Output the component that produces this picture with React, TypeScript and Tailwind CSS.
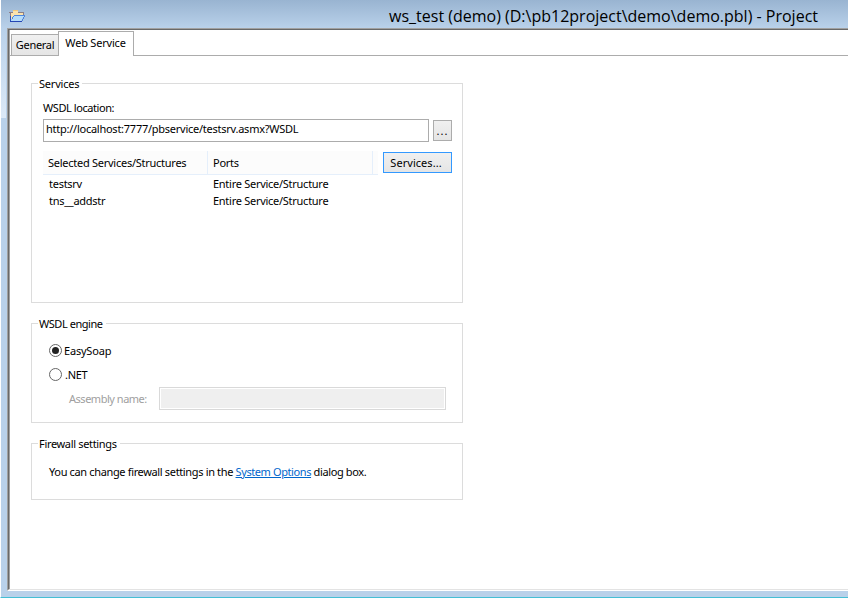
import type { ReactNode } from "react";

type Row = { name: string; port: string };

const rows: Row[] = [
  { name: "testsrv", port: "Entire Service/Structure" },
  { name: "tns__addstr", port: "Entire Service/Structure" },
];

function FolderIcon() {
  return (
    <svg width="17" height="13" viewBox="0 0 17 13" shapeRendering="crispEdges">
      <path d="M2 3h2V1h5v2h5v3H5l-3 4z" fill="#fbe3ad" />
      <path d="M4 0h5v1H4z" fill="#f3c876" />
      <path d="M0 2h4v1H0zM9 2h6v1H9zM14 3h1v2h-1z" fill="#8d7f86" />
      <path d="M1 3h1v3H1z" fill="#8d7f86" />
      <path d="M1 6h1v5H1z" fill="#2c55c0" />
      <path d="M5 6h10l-3 5H2z" fill="#b5dcfa" />
      <path d="M5 5h11v1H5zM15 6h1v1h-1zM14 7h1v2h-1zM13 9h1v2h-1zM4 6h1v1H4zM3 7h1v2H3z" fill="#4f86dc" />
      <path d="M1 11h12v1H1z" fill="#2546b4" />
    </svg>
  );
}

function GroupBox({
  title,
  className,
  titleClass,
  children,
}: {
  title: string;
  className: string;
  titleClass: string;
  children: ReactNode;
}) {
  return (
    <section className={`w-[432px] border border-[#dcdcdc] ${className}`}>
      <h2
        className={`-mt-[7px] ml-[6px] h-[13px] w-fit bg-white pr-[3px] pl-[1px] leading-[14px] ${titleClass}`}
      >
        {title}
      </h2>
      {children}
    </section>
  );
}

function Radio({ checked }: { checked?: boolean }) {
  return (
    <span className="flex size-[13px] items-center justify-center rounded-full border border-[#666]">
      {checked && <span className="size-[7px] rounded-full bg-[#222]" />}
    </span>
  );
}

export default function App() {
  return (
    <div className="flex h-[598px] w-[848px] flex-col overflow-hidden border-b border-b-[#45bfd5] border-l border-l-white bg-[#b9d1ea] font-['Noto_Sans',sans-serif] text-[11px] text-black">
      <header className="flex h-7 shrink-0 items-start justify-between bg-linear-to-b from-[#99b4d1] to-[#b9d1ea] pr-[30px] pl-2">
        <div className="mt-[10px]">
          <FolderIcon />
        </div>
        <h1 className="mt-[5px] font-['Open_Sans',sans-serif] text-[16px] leading-[22px] whitespace-nowrap">
          ws_test (demo) (D:\pb12project\demo\demo.pbl) - Project
        </h1>
      </header>

      <div className="flex h-[563px] shrink-0">
        <div className="w-[6px] pr-px">
          <div className="h-[90px] bg-linear-to-b from-[#b9d1ea] to-[#dce9f7]" />
        </div>
        <main className="flex-1 border-t border-l border-[#a0a0a0] border-b border-b-white bg-white">
          <div className="h-full border-t border-l border-[#696969] border-b border-b-[#e3e3e3]">
            <div className="h-full border-l border-[#a0a0a0]">
              <nav className="flex h-[26px] items-end border-b border-[#acacac]">
                <button className="ml-px h-[21px] w-[47px] border border-r-0 border-b-0 border-[#acacac] bg-linear-to-b from-[#f0f0f0] to-[#e5e5e5] tracking-[-0.3px]">
                  General
                </button>
                <button className="-mb-px h-[25px] w-[76px] border border-b-0 border-[#acacac] bg-white pr-px pb-[2px] tracking-[-0.2px]">
                  Web Service
                </button>
              </nav>

              <div className="flex flex-col gap-5 pt-[27px] pl-[21px] whitespace-nowrap">
                <GroupBox
                  title="Services"
                  className="h-[220px]"
                  titleClass="tracking-[-0.2px]"
                >
                  <div className="pt-[10px] pl-[11px]">
                    <p className="h-4 leading-4 tracking-[-0.43px]">
                      WSDL location:
                    </p>
                    <div className="mt-[3px] flex gap-[4px]">
                      <div className="h-[23px] w-[386px] border border-[#acacac] pl-[2px] leading-[18px] tracking-[-0.25px]">
                        http://localhost:7777/pbservice/testsrv.asmx?WSDL
                      </div>
                      <button className="mt-px h-[21px] w-[19px] border border-[#acacac] bg-linear-to-b from-[#f0f0f0] to-[#e5e5e5] pt-px tracking-[1px]">
                        ...
                      </button>
                    </div>
                    <div className="mt-[9px] flex">
                      <div className="w-[335px]">
                        <div className="flex h-6 border-b border-[#e5effb] bg-[#fcfcfc] leading-6 tracking-[-0.26px]">
                          <span className="w-[165px] border-r border-[#e5effb] pl-[5px]">
                            Selected Services/Structures
                          </span>
                          <span className="w-[165px] border-r border-[#e5effb] pl-[5px]">
                            Ports
                          </span>
                        </div>
                        {rows.map((row) => (
                          <div
                            key={row.name}
                            className="flex h-[17px] leading-[17px] tracking-[-0.27px]"
                          >
                            <span className="w-[165px] pl-[6px]">{row.name}</span>
                            <span className="pl-[5px]">{row.port}</span>
                          </div>
                        ))}
                      </div>
                      <button className="mt-px ml-[5px] h-[21px] w-[69px] border border-[#3399ff] bg-linear-to-b from-[#f0f0f0] to-[#e5e5e5] pt-px pr-[3px] tracking-[0.05px]">
                        Services...
                      </button>
                    </div>
                  </div>
                </GroupBox>

                <GroupBox
                  title="WSDL engine"
                  className="h-[100px]"
                  titleClass="tracking-[-0.45px]"
                >
                  <div className="pt-[13px] pl-[17px]">
                    <label className="flex h-[15px] items-center gap-[2px] tracking-[-0.2px]">
                      <Radio checked />
                      <span className="pt-[2px]">EasySoap</span>
                    </label>
                    <label className="mt-[9px] flex h-[15px] items-center gap-[3px] tracking-[-0.3px]">
                      <Radio />
                      <span className="pt-[2px]">.NET</span>
                    </label>
                    <div className="mt-[5px] flex items-center pl-5 text-[#a0a0a0]">
                      <span className="w-[90px] pt-px tracking-[-0.48px]">
                        Assembly name:
                      </span>
                      <div className="h-[23px] w-[287px] border border-[#d9d9d9] bg-[#efefef] inset-ring inset-ring-white" />
                    </div>
                  </div>
                </GroupBox>

                <GroupBox
                  title="Firewall settings"
                  className="h-[57px]"
                  titleClass="tracking-[-0.33px]"
                >
                  <p className="mt-[14px] pl-[17px] leading-4 tracking-[-0.35px]">
                    <span>You can change firewall settings in the </span>
                    <a className="tracking-[-0.4px] text-[#0066cc] underline">
                      System Options
                    </a>
                    <span className="tracking-[-0.38px]"> dialog box.</span>
                  </p>
                </GroupBox>
              </div>
            </div>
          </div>
        </main>
      </div>
    </div>
  );
}
